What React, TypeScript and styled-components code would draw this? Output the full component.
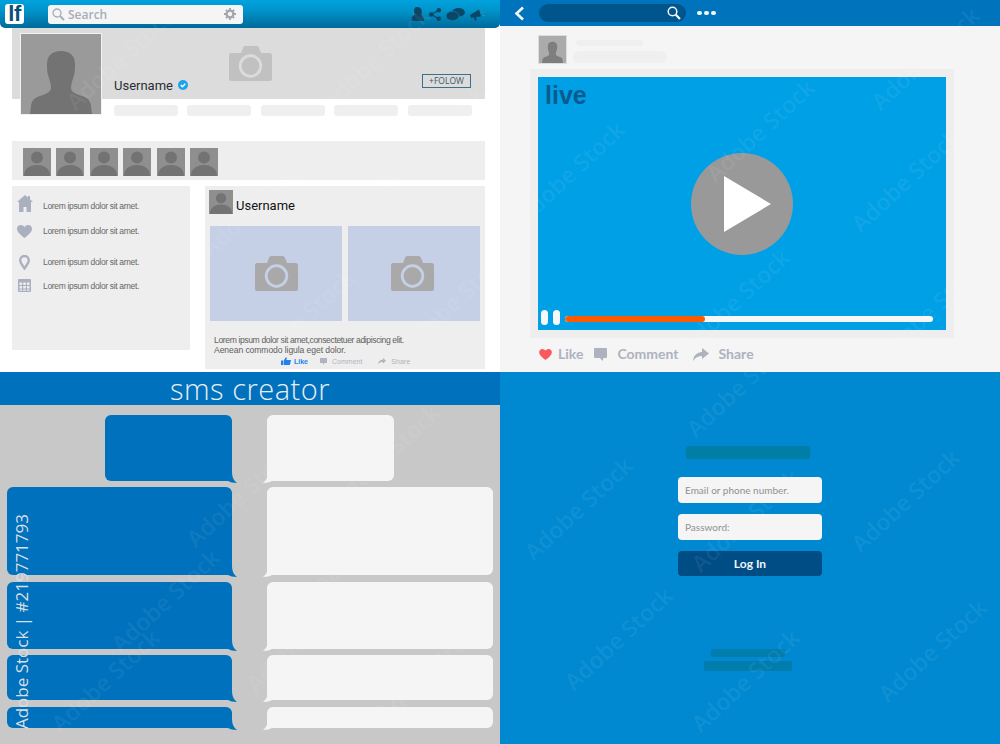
import React from 'react';
import styled, { createGlobalStyle } from 'styled-components';

const GlobalStyle = createGlobalStyle`
  html, body {
    margin: 0;
    padding: 0;
    background: #fff;
  }
  * {
    box-sizing: border-box;
  }
`;

// --- Page ---
const Page = styled.div`
  width: 1000px;
  height: 744px;
  display: grid;
  grid-template-columns: 500px 500px;
  grid-template-rows: 372px 372px;
  position: relative;
  overflow: hidden;
  font-family: 'Open Sans', sans-serif;
`;

// --- Profile panel ---
const ProfilePanel = styled.section`
  background: #fff;
  display: flex;
  flex-direction: column;
  overflow: hidden;
`;

const TopBar = styled.header`
  height: 28px;
  flex: none;
  display: flex;
  align-items: center;
  padding: 0 15px 0 5px;
  background: linear-gradient(180deg, #00a2dd 0%, #0095cc 35%, #00699a 100%);
  border-radius: 0 0 5px 5px;
`;

const Logo = styled.div`
  width: 19px;
  height: 20px;
  border-radius: 3px;
  background: #fff;
  color: #0a4f74;
  font: bold 22px/20px 'Liberation Sans', sans-serif;
  letter-spacing: -0.5px;
  text-align: center;
`;

const SearchBox = styled.div`
  width: 195px;
  height: 19px;
  margin-left: 24px;
  padding: 0 7px 0 4px;
  display: flex;
  align-items: center;
  gap: 3px;
  border-radius: 3px;
  background: #f5f5f6;
  color: #a7adb8;
  font-size: 12px;
  font-weight: 600;
`;

const SearchLabel = styled.span`
  flex: 1;
`;

const TopIcons = styled.div`
  margin-left: auto;
  display: flex;
  align-items: center;
  gap: 5px;
`;

const Content = styled.div`
  padding: 0 15px 0 12px;
  display: flex;
  flex-direction: column;
`;

const Cover = styled.div`
  height: 71px;
  background: #dcdcdc;
  display: flex;
  align-items: flex-start;
  padding: 5px 14px 0 8px;
`;

const BigAvatar = styled.div`
  width: 82px;
  height: 82px;
  flex: none;
  border: 1px solid #f2f2f2;
  background: #9a9a9a;
  overflow: hidden;
`;

const ProfileInfo = styled.div`
  flex: 1;
  height: 100%;
  padding: 13px 0 0 12px;
  display: flex;
  justify-content: space-between;
`;

const CoverCamera = styled.div`
  flex: 1;
  display: flex;
  align-items: flex-start;
  padding-left: 41px;
`;

const UserRow = styled.div`
  margin-top: 30px;
  display: flex;
  align-items: center;
  gap: 5px;
  height: 18px;
  color: #2a2d33;
  font: 13px Roboto, sans-serif;
  white-space: nowrap;
`;

const FollowButton = styled.div`
  margin-top: 28px;
  width: 49px;
  height: 14px;
  border: 1px solid #3f6f84;
  color: #3c5a69;
  font-size: 8.5px;
  line-height: 12px;
  text-align: center;
  white-space: nowrap;
`;

const TabRow = styled.div`
  margin: 6px 0 0 102px;
  display: flex;
  gap: 9.4px;
`;

const TabStub = styled.div`
  width: 64px;
  height: 11px;
  border-radius: 3px;
  background: #efefef;
`;

const FriendsBar = styled.div`
  height: 39px;
  margin-top: 25px;
  padding: 7px 11px;
  background: #eeeeee;
  display: flex;
  gap: 5.4px;
`;

const Thumb = styled.div`
  width: 28px;
  height: 28px;
  background: #8f8f8f;
  overflow: hidden;
`;

const Columns = styled.div`
  margin-top: 6px;
  display: flex;
  gap: 15px;
  align-items: flex-start;
`;

const InfoCard = styled.div`
  width: 178px;
  height: 164px;
  flex: none;
  background: #eeeeee;
  display: flex;
  flex-direction: column;
`;

const InfoRow = styled.div<{ $top: number }>`
  height: 18px;
  margin-top: ${p => p.$top}px;
  padding-left: 4px;
  display: flex;
  align-items: center;
  gap: 10px;
  color: #666;
  font: 8.5px 'Liberation Sans', sans-serif;
  letter-spacing: -0.33px;
`;

const InfoIcon = styled.div<{ $lift: number }>`
  width: 17px;
  margin-top: ${p => -p.$lift}px;
  display: flex;
  justify-content: center;
`;

const PostCard = styled.div`
  flex: 1;
  height: 183px;
  background: #eeeeee;
  padding: 4px 5px 0 4px;
  display: flex;
  flex-direction: column;
`;

const PostHead = styled.div`
  display: flex;
  align-items: center;
  gap: 3px;
  color: #111;
  font: 13px Roboto, sans-serif;
`;

const PostName = styled.span`
  margin-top: 6px;
`;

const PostThumb = styled(Thumb)`
  width: 24px;
  height: 24px;
`;

const PhotoRow = styled.div`
  margin-top: 12px;
  padding-left: 1px;
  display: flex;
  gap: 6px;
`;

const Photo = styled.div<{ $shift: number }>`
  width: 132px;
  height: 95px;
  padding-right: ${p => p.$shift}px;
  background: #c5d0e7;
  display: flex;
  align-items: center;
  justify-content: center;
`;

const PostText = styled.div`
  margin: 15px 0 0 5px;
  color: #606060;
  font: 8.6px/9.5px 'Liberation Sans', sans-serif;
`;

const PostLine = styled.div<{ $spacing: number }>`
  letter-spacing: ${p => p.$spacing}px;
  white-space: nowrap;
`;

const PostActions = styled.div`
  margin: 2px 0 0 72px;
  display: flex;
  align-items: center;
  font: 7px 'Liberation Sans', sans-serif;
`;

const PostAction = styled.span<{ $active?: boolean; $gap: number }>`
  display: flex;
  align-items: center;
  gap: ${p => (p.$active ? 3 : 5)}px;
  margin-right: ${p => p.$gap}px;
  color: ${p => (p.$active ? '#1f83e8' : '#b0b4bd')};
  font-weight: ${p => (p.$active ? 700 : 400)};
`;

// --- Live panel ---
const LivePanel = styled.section`
  background: #f5f5f5;
  display: flex;
  flex-direction: column;
  overflow: hidden;
`;

const LiveBar = styled.header`
  height: 26px;
  flex: none;
  background: #0073bd;
  display: flex;
  align-items: center;
  padding-left: 14px;
`;

const LiveSearch = styled.div`
  width: 147px;
  height: 18px;
  margin-left: 14px;
  padding-right: 5px;
  border-radius: 9px;
  background: #00558c;
  display: flex;
  align-items: center;
  justify-content: flex-end;
`;

const Dots = styled.div`
  margin-left: 11px;
  display: flex;
  gap: 2.5px;
`;

const Dot = styled.i`
  width: 4.5px;
  height: 4.5px;
  border-radius: 50%;
  background: #f3f6f9;
`;

const AuthorRow = styled.div`
  margin: 9px 0 0 38px;
  height: 29px;
  display: flex;
  gap: 6px;
`;

const AuthorAvatar = styled.div`
  width: 29px;
  height: 29px;
  border: 1px solid #ddd;
  background: #ababab;
  overflow: hidden;
`;

const AuthorLines = styled.div`
  display: flex;
  flex-direction: column;
  align-items: flex-start;
  padding-top: 5px;
  gap: 5px;
`;

const Line = styled.div<{ $width: number; $height: number; $indent?: number }>`
  width: ${p => p.$width}px;
  height: ${p => p.$height}px;
  margin-left: ${p => p.$indent ?? 0}px;
  border-radius: 6px;
  background: #efefef;
`;

const VideoFrame = styled.div`
  width: 424px;
  height: 269px;
  margin: 5px 0 0 30px;
  padding: 8px;
  background: #eeeeee;
`;

const Video = styled.div`
  height: 253px;
  background: #00a0e6;
  display: flex;
  flex-direction: column;
`;

const LiveTag = styled.div`
  height: 33px;
  padding: 3px 0 0 7px;
  color: #0a5a8e;
  font: bold 25px/30px 'Liberation Sans', sans-serif;
`;

const PlayArea = styled.div`
  flex: 1;
  display: flex;
  align-items: flex-start;
  justify-content: center;
  padding-top: 43px;
`;

const Controls = styled.div`
  height: 27px;
  flex: none;
  padding: 7px 13px 0 3px;
  display: flex;
  gap: 5px;
`;

const PauseBar = styled.div`
  width: 7px;
  height: 15px;
  border-radius: 3.5px;
  background: #f7f7f7;
`;

const Track = styled.div`
  flex: 1;
  height: 6px;
  margin-top: 6px;
  border-radius: 3px;
  background: #f7f7f7;
  overflow: hidden;
`;

const Progress = styled.div`
  height: 100%;
  border-radius: 3px;
  background: #ff5a00;
`;

const ActionRow = styled.div`
  margin: 7px 0 0 39px;
  display: flex;
  align-items: center;
  color: #aeb2bf;
  font: 700 14px/18px Lato, sans-serif;
`;

const LiveAction = styled.span<{ $gap: number; $iconGap: number }>`
  display: flex;
  align-items: center;
  gap: ${p => p.$iconGap}px;
  margin-right: ${p => p.$gap}px;
`;

// --- SMS panel ---
const SmsPanel = styled.section`
  background: #c8c8c8;
  display: flex;
  flex-direction: column;
`;

const SmsTitle = styled.h1`
  height: 33px;
  flex: none;
  margin: 0;
  background: #0071bc;
  color: #e8eef5;
  font-size: 29px;
  font-weight: 300;
  line-height: 33px;
  letter-spacing: 0.5px;
  text-align: center;
`;

const BubbleGrid = styled.div`
  padding: 10px 7px 0 7px;
  display: grid;
  grid-template-columns: 225px 226px;
  column-gap: 35px;
`;

const BubbleRow = styled.div<{ $narrow?: boolean; $height: number; $gap: number }>`
  height: ${p => p.$height}px;
  margin-bottom: ${p => p.$gap}px;
  display: flex;
  justify-content: ${p => (p.$narrow ? 'flex-end' : 'flex-start')};
`;

const Bubble = styled.div<{ $side: 'blue' | 'white'; $narrow?: boolean }>`
  width: ${p => (p.$narrow ? '127px' : '100%')};
  height: 100%;
  position: relative;
  border-radius: 6px;
  background: ${p => (p.$side === 'blue' ? '#0071bc' : '#f5f5f5')};
`;

const TailShape = styled.svg<{ $side: 'blue' | 'white' }>`
  position: absolute;
  bottom: -2px;
  ${p => (p.$side === 'blue' ? 'right: -5px;' : 'left: -4px;')}
  fill: ${p => (p.$side === 'blue' ? '#0071bc' : '#f5f5f5')};
`;

// --- Login panel ---
const LoginPanel = styled.section`
  background: #0089d1;
  display: flex;
  flex-direction: column;
  align-items: center;
  padding-top: 74px;
`;

const LoginTitle = styled.div`
  width: 124px;
  height: 13px;
  margin-right: 4px;
  border-radius: 2px;
  background: #007ea6;
`;

const LoginForm = styled.div`
  margin-top: 18px;
  width: 144px;
  display: flex;
  flex-direction: column;
  gap: 11px;
`;

const Field = styled.div`
  height: 26px;
  padding-left: 7px;
  border-radius: 4px;
  background: #f5f5f5;
  color: #909090;
  font: 10px/26px Lato, sans-serif;
`;

const LoginButton = styled.div`
  height: 25px;
  border-radius: 4px;
  background: #004c85;
  color: #f0f4f8;
  font: 700 12px/25px Lato, sans-serif;
  text-align: center;
`;

const FooterStub = styled.div<{ $width: number; $top: number; $height: number }>`
  width: ${p => p.$width}px;
  height: ${p => p.$height}px;
  margin-top: ${p => p.$top}px;
  margin-right: 4px;
  border-radius: 2px;
  background: #007cad;
`;

// --- Watermark overlay ---
const StockId = styled.div`
  position: absolute;
  left: 12px;
  bottom: 15px;
  writing-mode: vertical-rl;
  transform: rotate(180deg);
  color: #d8dfe6;
  font-size: 17px;
  line-height: 20px;
  white-space: nowrap;
`;

const Mark = styled.div<{ $x: number; $y: number }>`
  position: absolute;
  left: ${p => p.$x}px;
  top: ${p => p.$y}px;
  transform: translate(-50%, -50%) rotate(-43deg);
  color: rgba(255, 255, 255, 0.08);
  font-size: 23px;
  font-weight: 600;
  white-space: nowrap;
  pointer-events: none;
`;

const marks = [
  [375, 58], [430, 135], [255, 205], [95, 250], [300, 320], [120, 58], [455, 300],
  [570, 172], [760, 130], [905, 180], [735, 300], [930, 310], [925, 58],
  [240, 495], [385, 455], [105, 680], [345, 560], [430, 670], [165, 600], [300, 640],
  [578, 508], [905, 500], [740, 385], [618, 638], [745, 680], [932, 650], [745, 520],
];

// --- Drawings ---
function Camera({ width, color, lens }: { width: number; color: string; lens: string }) {
  return (
    <svg width={width} viewBox="0 0 43 35" style={{ display: 'block' }}>
      <path
        d="M2 7h10l2-5c.4-1 1-2 2-2h12c1 0 1.6 1 2 2l2 5h9c1 0 2 1 2 2v24c0 1-1 2-2 2H2c-1 0-2-1-2-2V9c0-1 1-2 2-2z"
        fill={color}
      />
      <circle cx="21.5" cy="20" r="10.3" fill="none" stroke={lens} strokeWidth="2.8" />
    </svg>
  );
}

function Bust({ color }: { color: string }) {
  return (
    <svg width="100%" height="100%" viewBox="0 0 80 80" style={{ display: 'block' }}>
      <path
        d="M40 17c-9 0-14 5-14 13 0 3 0 8 1 11 1 4 3 8 3 13 0 3-3 5-8 7-6 2-11 3-12 11l-1 8h62l-1-8c-1-8-6-9-12-11-5-2-8-4-8-7 0-5 2-9 3-13 1-3 1-8 1-11 0-8-5-13-14-13z"
        fill={color}
      />
    </svg>
  );
}

function Silhouette() {
  return (
    <svg width="100%" height="100%" viewBox="0 0 28 28" style={{ display: 'block' }}>
      <circle cx="14" cy="9.5" r="6" fill="#737373" />
      <path d="M1 28c0-7 5-11 13-11s13 4 13 11z" fill="#737373" />
    </svg>
  );
}

function Check() {
  return (
    <svg width="10" height="10" viewBox="0 0 10 10">
      <circle cx="5" cy="5" r="5" fill="#1ba4ea" />
      <path d="M2.8 5l1.6 1.7 2.9-3" fill="none" stroke="#fff" strokeWidth="1.4" />
    </svg>
  );
}

function Tail({ side }: { side: 'blue' | 'white' }) {
  return (
    <TailShape $side={side} width="11" height="12" viewBox="0 0 11 12">
      {side === 'blue' ? (
        <path d="M0 0h6c0 5 1 9 5 12-4 0-7-1-9-2H0z" />
      ) : (
        <path d="M11 0H5c0 5-1 9-5 12 4 0 7-1 9-2h2z" />
      )}
    </TailShape>
  );
}

const infoItems = [
  {
    top: 11,
    lift: 6,
    icon: (
      <svg width="16" height="17" viewBox="0 0 16 17" fill="#aab0c0">
        <path d="M8 0l3 2.5V1h2v3.2L16 7h-2v10H9.5v-5h-3v5H2V7H0z" />
      </svg>
    ),
  },
  {
    top: 7,
    lift: 0,
    icon: (
      <svg width="15" height="13" viewBox="0 0 15 13" fill="#aab0c0">
        <path d="M7.5 13C3 9.5 0 7 0 3.8 0 1.5 1.7 0 3.8 0c1.6 0 3 .9 3.7 2.2C8.2.9 9.6 0 11.2 0 13.3 0 15 1.5 15 3.8 15 7 12 9.5 7.5 13z" />
      </svg>
    ),
  },
  {
    top: 13,
    lift: 0,
    icon: (
      <svg width="11" height="15" viewBox="0 0 11 15" fill="none" stroke="#aab0c0" strokeWidth="2.4">
        <path d="M5.5 13.5C3 10 1.2 7.6 1.2 5.3a4.3 4.3 0 0 1 8.6 0c0 2.3-1.8 4.700-4.3 8.2z" />
      </svg>
    ),
  },
  {
    top: 6,
    lift: 2,
    icon: (
      <svg width="13" height="13" viewBox="0 0 13 13" fill="#aab0c0">
        <path d="M1 0h11a1 1 0 0 1 1 1v11a1 1 0 0 1-1 1H1a1 1 0 0 1-1-1V1a1 1 0 0 1 1-1zm.5 3.5v2.4h2.6V3.5zm3.7 0v2.4h2.6V3.5zm3.7 0v2.4h2.6V3.5zM1.5 7v2.5h2.6V7zm3.7 0v2.5h2.6V7zm3.7 0v2.5h2.6V7zm-7.4 3.500v1.2h2.6v-1.2zm3.7 0v1.2h2.6v-1.2zm3.7 0v1.2h2.6v-1.2z" />
      </svg>
    ),
  },
];

const smsRows = [
  { height: 66, gap: 6, narrow: true },
  { height: 88, gap: 7, narrow: false },
  { height: 67, gap: 6, narrow: false },
  { height: 45, gap: 7, narrow: false },
  { height: 21, gap: 0, narrow: false },
];

export default function App() {
  return (
    <Page>
      <GlobalStyle />

      <ProfilePanel>
        <TopBar>
          <Logo>lf</Logo>
          <SearchBox>
            <svg width="13" height="13" viewBox="0 0 13 13" fill="none" stroke="#a7adb8" strokeWidth="1.3">
              <circle cx="5" cy="5" r="4" />
              <path d="M8 8l4 4" strokeWidth="2" />
            </svg>
            <SearchLabel>Search</SearchLabel>
            <svg width="12" height="12" viewBox="0 0 12 12">
              <circle cx="6" cy="6" r="3.4" fill="none" stroke="#a2a7ae" strokeWidth="2.4" />
              <path
                d="M6 0v12M0 6h12M1.8 1.8l8.4 8.4M10.2 1.8l-8.4 8.4"
                stroke="#a2a7ae"
                strokeWidth="1.8"
                strokeDasharray="2 8"
              />
            </svg>
          </SearchBox>
          <TopIcons>
            <svg width="13" height="14" viewBox="0 0 13 14" fill="#0c4565">
              <path d="M6 0C3.8 0 3 1.8 3 3.8c0 1.6.4 3 1 4C2 8.500.5 10 .5 14H13c0-3-.8-5-2.500-6 .5-1 .8-2.500.5-4C10.600 1.500 8.500 0 6 0z" />
            </svg>
            <svg width="12" height="13" viewBox="0 0 12 13" fill="#0c4565">
              <circle cx="2.3" cy="6.5" r="2.2" />
              <circle cx="9.8" cy="2.2" r="2.2" />
              <circle cx="9.8" cy="10.8" r="2.2" />
              <path d="M2.3 6.5l7.5-4.3M2.3 6.5l7.5 4.3" stroke="#0c4565" strokeWidth="1.1" />
            </svg>
            <svg width="19" height="13" viewBox="0 0 19 13" fill="#0c4565">
              <ellipse cx="12.5" cy="4.3" rx="6.5" ry="4.3" />
              <ellipse cx="6.5" cy="8" rx="6.5" ry="4.7" stroke="#0080b0" strokeWidth="0.8" />
            </svg>
            <svg width="15" height="14" viewBox="0 0 15 14" fill="#0c4565">
              <path d="M0 8L9 2.5l2 7-5 .5.8 3-1.800.5-1.200-3.300L1 11z" />
              <path d="M11 3l1.500-2M12 6l2.500-1M12.500 8.500H15" stroke="#3f8fb0" strokeWidth="0.8" />
            </svg>
          </TopIcons>
        </TopBar>

        <Content>
          <Cover>
            <BigAvatar>
              <Bust color="#737373" />
            </BigAvatar>
            <ProfileInfo>
              <UserRow>
                Username <Check />
              </UserRow>
              <CoverCamera>
                <Camera width={43} color="#c1c1c1" lens="#dcdcdc" />
              </CoverCamera>
              <FollowButton>+FOLOW</FollowButton>
            </ProfileInfo>
          </Cover>

          <TabRow>
            {[0, 1, 2, 3, 4].map(i => (
              <TabStub key={i} />
            ))}
          </TabRow>

          <FriendsBar>
            {[0, 1, 2, 3, 4, 5].map(i => (
              <Thumb key={i}>
                <Silhouette />
              </Thumb>
            ))}
          </FriendsBar>

          <Columns>
            <InfoCard>
              {infoItems.map((item, i) => (
                <InfoRow key={i} $top={item.top}>
                  <InfoIcon $lift={item.lift}>{item.icon}</InfoIcon>
                  <span>Lorem ipsum dolor sit amet.</span>
                </InfoRow>
              ))}
            </InfoCard>

            <PostCard>
              <PostHead>
                <PostThumb>
                  <Silhouette />
                </PostThumb>
                <PostName>Username</PostName>
              </PostHead>
              <PhotoRow>
                <Photo $shift={0}>
                  <Camera width={43} color="#a9a9a9" lens="#c5d0e7" />
                </Photo>
                <Photo $shift={4}>
                  <Camera width={43} color="#a9a9a9" lens="#c5d0e7" />
                </Photo>
              </PhotoRow>
              <PostText>
                <PostLine $spacing={-0.39}>Lorem ipsum dolor sit amet,consectetuer adipiscing elit.</PostLine>
                <PostLine $spacing={-0.09}>Aenean commodo ligula eget dolor.</PostLine>
              </PostText>
              <PostActions>
                <PostAction $active $gap={12}>
                  <svg width="10" height="8" viewBox="0 0 9 7" fill="#1f83e8">
                    <path d="M0 3h2v4H0zM2.5 3L4.5 0l.7.5-.3 2H9L8 7H2.5z" />
                  </svg>
                  Like
                </PostAction>
                <PostAction $gap={16}>
                  <svg width="7" height="7" viewBox="0 0 7 7" fill="#b0b4bd">
                    <path d="M0 0h7v5H4.5L3 7V5H0z" />
                  </svg>
                  Comment
                </PostAction>
                <PostAction $gap={0}>
                  <svg width="8" height="6" viewBox="0 0 8 6" fill="#b0b4bd">
                    <path d="M5 0l3 2.7L5 5.5V4C3 4 1.5 4.5 0 6c.3-2.5 2-4.3 5-4.5z" />
                  </svg>
                  Share
                </PostAction>
              </PostActions>
            </PostCard>
          </Columns>
        </Content>
      </ProfilePanel>

      <LivePanel>
        <LiveBar>
          <svg width="11" height="15" viewBox="0 0 11 15" fill="none" stroke="#f5f8fb" strokeWidth="2.6">
            <path d="M9 1.5L2.5 7.5 9 13.5" />
          </svg>
          <LiveSearch>
            <svg width="14" height="14" viewBox="0 0 14 14" fill="none" stroke="#f5f8fb" strokeWidth="1.5">
              <circle cx="5.5" cy="5.5" r="4.3" />
              <path d="M8.8 8.8l4.2 4.2" strokeWidth="2.2" />
            </svg>
          </LiveSearch>
          <Dots>
            <Dot />
            <Dot />
            <Dot />
          </Dots>
        </LiveBar>

        <AuthorRow>
          <AuthorAvatar>
            <Bust color="#7e7e7e" />
          </AuthorAvatar>
          <AuthorLines>
            <Line $width={67} $height={6} $indent={3} />
            <Line $width={94} $height={12} />
          </AuthorLines>
        </AuthorRow>

        <VideoFrame>
          <Video>
            <LiveTag>live</LiveTag>
            <PlayArea>
              <svg width="102" height="102" viewBox="0 0 102 102">
                <circle cx="51" cy="51" r="51" fill="#999" />
                <path d="M33 23l47 28-47 28z" fill="#fff" />
              </svg>
            </PlayArea>
            <Controls>
              <PauseBar />
              <PauseBar />
              <Track>
                <Progress style={{ width: `${(140 / 368) * 100}%` }} />
              </Track>
            </Controls>
          </Video>
        </VideoFrame>

        <ActionRow>
          <LiveAction $gap={11} $iconGap={6}>
            <svg width="13" height="11" viewBox="0 0 15 13" fill="#f9585c">
              <path d="M7.5 13C3 9.5 0 7 0 3.8 0 1.5 1.7 0 3.8 0c1.6 0 3 .9 3.7 2.2C8.2.9 9.6 0 11.2 0 13.3 0 15 1.5 15 3.8 15 7 12 9.5 7.5 13z" />
            </svg>
            Like
          </LiveAction>
          <LiveAction $gap={14} $iconGap={10}>
            <svg width="13" height="13" viewBox="0 0 13 13" fill="#aeb2bf">
              <path d="M1 0h11a1 1 0 0 1 1 1v8a1 1 0 0 1-1 1H9.5l-1 3-2.5-3H1a1 1 0 0 1-1-1V1a1 1 0 0 1 1-1z" />
            </svg>
            Comment
          </LiveAction>
          <LiveAction $gap={0} $iconGap={10}>
            <svg width="16" height="13" viewBox="0 0 16 13" fill="#aeb2bf">
              <path d="M9 0l7 5.5L9 11V8C5 8 2.5 9.5 0 13c.5-5 3.5-8.5 9-9z" />
            </svg>
            Share
          </LiveAction>
        </ActionRow>
      </LivePanel>

      <SmsPanel>
        <SmsTitle>sms creator</SmsTitle>
        <BubbleGrid>
          {smsRows.map((row, i) => (
            <React.Fragment key={i}>
              <BubbleRow $narrow={row.narrow} $height={row.height} $gap={row.gap}>
                <Bubble $side="blue" $narrow={row.narrow}>
                  <Tail side="blue" />
                </Bubble>
              </BubbleRow>
              <BubbleRow $height={row.height} $gap={row.gap}>
                <Bubble $side="white" $narrow={row.narrow}>
                  <Tail side="white" />
                </Bubble>
              </BubbleRow>
            </React.Fragment>
          ))}
        </BubbleGrid>
      </SmsPanel>

      <LoginPanel>
        <LoginTitle />
        <LoginForm>
          <Field>Email or phone number.</Field>
          <Field>Password:</Field>
          <LoginButton>Log In</LoginButton>
        </LoginForm>
        <FooterStub $width={74} $top={73} $height={8} />
        <FooterStub $width={88} $top={4} $height={10} />
      </LoginPanel>

      {marks.map(([x, y], i) => (
        <Mark key={i} $x={x} $y={y}>
          Adobe Stock
        </Mark>
      ))}
      <StockId>Adobe Stock | #219771793</StockId>
    </Page>
  );
}
